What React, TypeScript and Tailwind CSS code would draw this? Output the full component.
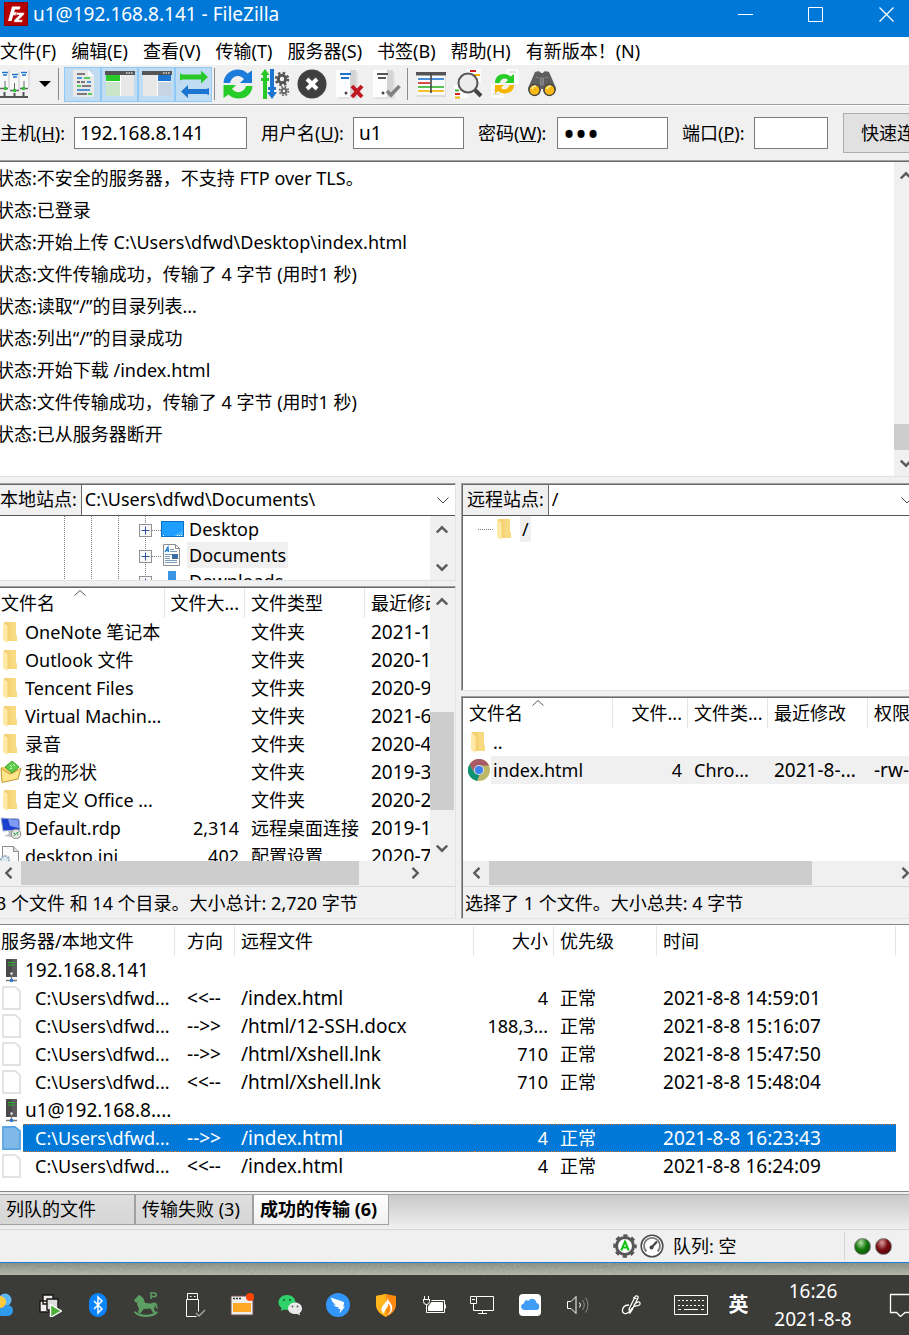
import type { ReactNode } from "react"

interface LocalFile {
  icon: "folder" | "shapes" | "rdp" | "ini"
  name: string
  size: string
  type: string
  modified: string
}

interface Transfer {
  server?: string
  direction?: string
  remote?: string
  size?: string
  time?: string
  selected?: boolean
}

const MENUS = ["文件(F)", "编辑(E)", "查看(V)", "传输(T)", "服务器(S)", "书签(B)", "帮助(H)", "有新版本！(N)"]

const LOG_LINES = [
  "不安全的服务器，不支持 FTP over TLS。",
  "已登录",
  "开始上传 C:\\Users\\dfwd\\Desktop\\index.html",
  "文件传输成功，传输了 4 字节 (用时1 秒)",
  "读取“/”的目录列表...",
  "列出“/”的目录成功",
  "开始下载 /index.html",
  "文件传输成功，传输了 4 字节 (用时1 秒)",
  "已从服务器断开",
]

const LOCAL_FILES: LocalFile[] = [
  { icon: "folder", name: "OneNote 笔记本", size: "", type: "文件夹", modified: "2021-12-1" },
  { icon: "folder", name: "Outlook 文件", size: "", type: "文件夹", modified: "2020-11-3" },
  { icon: "folder", name: "Tencent Files", size: "", type: "文件夹", modified: "2020-9-12" },
  { icon: "folder", name: "Virtual Machin...", size: "", type: "文件夹", modified: "2021-6-20" },
  { icon: "folder", name: "录音", size: "", type: "文件夹", modified: "2020-4-15" },
  { icon: "shapes", name: "我的形状", size: "", type: "文件夹", modified: "2019-3-18" },
  { icon: "folder", name: "自定义 Office ...", size: "", type: "文件夹", modified: "2020-2-21" },
  { icon: "rdp", name: "Default.rdp", size: "2,314", type: "远程桌面连接", modified: "2019-12-9" },
  { icon: "ini", name: "desktop.ini", size: "402", type: "配置设置", modified: "2020-7-30" },
]

const TRANSFERS: Transfer[] = [
  { server: "192.168.8.141" },
  { direction: "<<--", remote: "/index.html", size: "4", time: "2021-8-8 14:59:01" },
  { direction: "-->>", remote: "/html/12-SSH.docx", size: "188,3...", time: "2021-8-8 15:16:07" },
  { direction: "-->>", remote: "/html/Xshell.lnk", size: "710", time: "2021-8-8 15:47:50" },
  { direction: "<<--", remote: "/html/Xshell.lnk", size: "710", time: "2021-8-8 15:48:04" },
  { server: "u1@192.168.8...." },
  { direction: "-->>", remote: "/index.html", size: "4", time: "2021-8-8 16:23:43", selected: true },
  { direction: "<<--", remote: "/index.html", size: "4", time: "2021-8-8 16:24:09" },
]

export default function App() {
  return (
    <div className="flex min-h-screen flex-col overflow-hidden bg-[#f0f0f0] font-['Noto_Sans','Noto_Sans_CJK_SC',sans-serif] text-[18px] leading-7 text-black">
      <TitleBar />
      <MenuBar />
      <Toolbar />
      <QuickConnect />
      <MessageLog />
      <main className="mt-[6px] grid grid-cols-[456fr_448fr] gap-[5px]">
        <LocalPane />
        <RemotePane />
      </main>
      <QueueList />
      <QueueTabs />
      <StatusBar />
      <Wallpaper />
      <Taskbar />
    </div>
  )
}

function TitleBar() {
  return (
    <header className="flex h-[37px] shrink-0 items-start justify-between overflow-hidden bg-[#0078d7] text-white">
      <div className="flex items-center gap-[5px] pl-1">
        <svg className="size-6" viewBox="0 0 24 24">
          <rect width="24" height="24" fill="#b40000" />
          <rect x=".5" y=".5" width="23" height="23" fill="none" stroke="#6e0000" strokeDasharray="1.5 1.5" />
          <path d="M4 19 8 4.500h8.500l-.9 3H11l-.8 2.800h3.600l-.9 2.900H9.300L7.600 19z" fill="#fff" />
          <path d="M12.500 10.500h8l-.6 2.300-5 5h4l-.7 2.500H9.600l.6-2.300 5-5h-3.300z" fill="#fff" stroke="#b40000" strokeWidth=".5" />
        </svg>
        <h1 className="text-[19px]">u1@192.168.8.141 - FileZilla</h1>
      </div>
      <div className="-mr-[13px] flex">
        <button type="button" aria-label="最小化" className="grid h-7 w-[70px] place-items-center">
          <svg className="size-4" viewBox="0 0 16 16" stroke="#fff"><path d="M0 8.500h15" /></svg>
        </button>
        <button type="button" aria-label="最大化" className="grid h-7 w-[70px] place-items-center">
          <svg className="size-4" viewBox="0 0 16 16" stroke="#fff" fill="none"><path d="M.5 1.500h14v14H.5z" /></svg>
        </button>
        <button type="button" aria-label="关闭" className="grid h-7 w-[71px] place-items-center">
          <svg className="size-4" viewBox="0 0 16 16" stroke="#fff" strokeWidth="1.300"><path d="m.5 1.500 14 14m0-14-14 14" /></svg>
        </button>
      </div>
    </header>
  )
}

function MenuBar() {
  return (
    <nav className="flex h-7 shrink-0 gap-[15px] overflow-hidden bg-white whitespace-nowrap">
      {MENUS.map((menu) => (
        <button key={menu} type="button">{menu}</button>
      ))}
    </nav>
  )
}

function Toolbar() {
  return (
    <div className="flex h-[41px] shrink-0 items-center border-b border-white bg-[#f0f0f0] pb-[2px] shadow-[inset_0_-1px_0_#a0a0a0]">
      <button type="button" aria-label="站点管理器" className="flex w-[58px] items-center gap-2">
        <SiteManagerIcon />
        <svg className="h-[6px] w-[12px]" viewBox="0 0 12 6"><path d="M0 0h12L6 6z" /></svg>
      </button>
      <Separator />
      <div className="ml-[5px] flex">
        <ToolButton label="消息日志" active><LogIcon /></ToolButton>
        <ToolButton label="本地目录树" active><LocalTreeIcon /></ToolButton>
        <ToolButton label="远程目录树" active><RemoteTreeIcon /></ToolButton>
        <ToolButton label="传输队列" active><QueueIcon /></ToolButton>
      </div>
      <div className="ml-[2px]"><Separator /></div>
      <div className="ml-1 flex">
        <ToolButton label="刷新"><RefreshIcon /></ToolButton>
        <ToolButton label="处理队列"><ProcessIcon /></ToolButton>
        <ToolButton label="取消"><CancelIcon /></ToolButton>
        <ToolButton label="断开"><DisconnectIcon /></ToolButton>
        <ToolButton label="重新连接"><ReconnectIcon /></ToolButton>
      </div>
      <div className="ml-[3px]"><Separator /></div>
      <div className="ml-1 flex">
        <ToolButton label="比较"><FilterIcon /></ToolButton>
        <ToolButton label="过滤"><SearchListIcon /></ToolButton>
        <ToolButton label="同步浏览"><SyncIcon /></ToolButton>
        <ToolButton label="搜索"><BinocularsIcon /></ToolButton>
      </div>
    </div>
  )
}

function Separator() {
  return <div className="h-8 w-px bg-[#8c8c8c]" />
}

function ToolButton({ label, active, children }: { label: string; active?: boolean; children: ReactNode }) {
  return (
    <button
      type="button"
      aria-label={label}
      className={`grid h-[35px] w-[37px] place-items-center ${active ? "border border-[#90c8f6] bg-[#c0dcf3]" : ""}`}
    >
      {children}
    </button>
  )
}

function QuickConnect() {
  const field = "h-8 border border-[#7a7a7a] bg-white px-[5px] outline-none"
  return (
    <form className="flex h-[54px] shrink-0 items-center overflow-hidden bg-[#f0f0f0] whitespace-nowrap">
      <label htmlFor="host" className="w-[74px] shrink-0">主机(<u>H</u>):</label>
      <input id="host" defaultValue="192.168.8.141" className={`${field} w-[173px] text-[19px]`} />
      <label htmlFor="user" className="w-[106px] shrink-0 pl-[14px]">用户名(<u>U</u>):</label>
      <input id="user" defaultValue="u1" className={`${field} w-[111px] text-[19px]`} />
      <label htmlFor="pass" className="w-[93px] shrink-0 pl-[14px]">密码(<u>W</u>):</label>
      <input id="pass" type="password" defaultValue="abc" className={`${field} w-[111px] text-[32px]`} />
      <label htmlFor="port" className="w-[86px] shrink-0 pl-[14px]">端口(<u>P</u>):</label>
      <input id="port" className={`${field} w-[74px] text-[19px]`} />
      <button type="button" className="ml-[15px] h-10 shrink-0 border border-[#adadad] bg-[#e1e1e1] px-[17px]">
        快速连接(Q)
      </button>
    </form>
  )
}

function MessageLog() {
  return (
    <section className="flex flex-1 overflow-hidden border-t border-b border-t-[#a0a0a0] border-b-[#e3e3e3] bg-white pt-px shadow-[inset_0_1px_0_#696969]">
      <div className="-ml-1 flex-1 pb-5 leading-8 whitespace-nowrap">
        {LOG_LINES.map((line, i) => (
          <p key={i}>状态:{line}</p>
        ))}
      </div>
      <div className="flex w-[15px] flex-col overflow-hidden bg-[#f0f0f0]">
        <VArrow />
        <div className="flex-1" />
        <div className="h-[26px] bg-[#cdcdcd]" />
        <VArrow down />
      </div>
    </section>
  )
}

function VArrow({ down }: { down?: boolean }) {
  return (
    <button type="button" aria-label={down ? "向下滚动" : "向上滚动"} className="grid h-[26px] w-6 shrink-0 place-items-center">
      <svg className="h-[9px] w-3" viewBox="0 0 12 9" fill="none" stroke="#5a5a5a" strokeWidth="2.400">
        <path d={down ? "m.8 1.500 5.200 5.200 5.200-5.200" : "M.8 7.500 6 2.300l5.200 5.200"} />
      </svg>
    </button>
  )
}

function HArrow({ right }: { right?: boolean }) {
  return (
    <button type="button" aria-label={right ? "向右滚动" : "向左滚动"} className="grid h-6 w-[26px] shrink-0 place-items-center">
      <svg className="h-3 w-[9px]" viewBox="0 0 9 12" fill="none" stroke="#5a5a5a" strokeWidth="2.400">
        <path d={right ? "M1.500.8 6.700 6l-5.200 5.200" : "M7.500.8 2.300 6l5.200 5.200"} />
      </svg>
    </button>
  )
}

function SitePicker({ id, label, value }: { id: string; label: string; value: string }) {
  return (
    <div className="flex h-[31px] border-b border-[#555] whitespace-nowrap">
      <label htmlFor={id} className="shrink-0 border-r border-[#696969] bg-[#f0f0f0] px-1">{label}</label>
      <div className="relative flex-1 bg-white">
        <select id={id} className="h-[28px] w-full appearance-none bg-white pl-[3px] outline-none">
          <option>{value}</option>
        </select>
        <svg className="pointer-events-none absolute top-3 right-[6px] h-[7px] w-3" viewBox="0 0 12 7" fill="none" stroke="#444">
          <path d="m.5.5 5.500 5.500 5.500-5.500" />
        </svg>
      </div>
    </div>
  )
}

function SortCaret({ className }: { className: string }) {
  return (
    <svg className={`absolute top-[2px] h-[6px] w-3 ${className}`} viewBox="0 0 12 6" fill="none" stroke="#555">
      <path d="M.5 5.500 6 .5l5.500 5" />
    </svg>
  )
}

const th = "h-[30px] border-r border-[#e5e5e5] text-left font-normal"
const sunken = "border-t border-t-[#a0a0a0] pt-px shadow-[inset_0_1px_0_#696969]"
const sunkenLeft = "border-t border-l border-t-[#a0a0a0] border-l-[#a0a0a0] pt-px pl-px shadow-[inset_1px_1px_0_#696969]"

function LocalPane() {
  return (
    <section className="flex min-w-0 flex-col">
      <div className={`border-r border-b border-[#e3e3e3] ${sunken}`}>
        <div className="-ml-1">
          <SitePicker id="local-site" label="本地站点:" value={"C:\\Users\\dfwd\\Documents\\"} />
        </div>
        <div className="flex h-16 overflow-hidden bg-white">
          <div className="flex flex-1">
            <TreeGuides />
            <ul className="leading-[26px]">
              <TreeItem label="Desktop"><DesktopIcon /></TreeItem>
              <TreeItem label="Documents" selected><DocumentIcon /></TreeItem>
              <TreeItem label="Downloads"><DownloadIcon /></TreeItem>
            </ul>
          </div>
          <div className="flex w-[25px] flex-col justify-between bg-[#f0f0f0]">
            <VArrow />
            <VArrow down />
          </div>
        </div>
      </div>
      <div className={`mt-[5px] flex-1 border-r border-b border-[#e3e3e3] ${sunken}`}>
        <div className="flex h-[273px] bg-white">
          <div className="min-w-0 flex-1 overflow-hidden">
            <table className="w-full table-fixed border-separate border-spacing-0 whitespace-nowrap">
              <colgroup>
                <col className="w-[23px]" />
                <col className="w-[142px]" />
                <col className="w-20" />
                <col className="w-[120px]" />
                <col />
              </colgroup>
              <thead>
                <tr>
                  <th colSpan={2} className={`${th} relative pl-px`}>文件名<SortCaret className="left-[74px]" /></th>
                  <th className={`${th} pr-[5px] text-right`}>文件大...</th>
                  <th className={`${th} pl-[6px]`}>文件类型</th>
                  <th className="overflow-hidden pl-[6px] text-left font-normal">最近修改</th>
                </tr>
              </thead>
              <tbody>
                {LOCAL_FILES.map((file) => (
                  <tr key={file.name} className="h-7">
                    <td><FileIcon kind={file.icon} /></td>
                    <td className="pl-[2px]">{file.name}</td>
                    <td className="pr-[6px] text-right">{file.size}</td>
                    <td className="pl-[6px]">{file.type}</td>
                    <td className="overflow-hidden pl-[6px] text-[19px]">{file.modified}</td>
                  </tr>
                ))}
              </tbody>
            </table>
          </div>
          <div className="flex w-[25px] flex-col bg-[#f0f0f0]">
            <VArrow />
            <div className="flex-1" />
            <div className="mr-px h-[98px] bg-[#cdcdcd]" />
            <div className="h-[25px]" />
            <VArrow down />
          </div>
        </div>
        <div className="flex h-6 bg-[#f0f0f0]">
          <div className="-ml-[5px]"><HArrow /></div>
          <div className="w-[338px] bg-[#cdcdcd]" />
          <div className="flex-1" />
          <div className="mr-[27px]"><HArrow right /></div>
        </div>
        <p className="-ml-1 mt-px h-8 border-t border-[#d9d9d9] pt-[2px] whitespace-nowrap">3 个文件 和 14 个目录。大小总计: 2,720 字节</p>
      </div>
    </section>
  )
}

function TreeGuides() {
  return (
    <svg className="h-16 w-[138px] shrink-0" viewBox="0 0 138 64" stroke="#808080" strokeDasharray="1 1">
      <path d="M64.500 0v64M91.500 0v64M118.500 0v64" />
    </svg>
  )
}

function TreeItem({ label, selected, children }: { label: string; selected?: boolean; children: ReactNode }) {
  return (
    <li className="flex items-center">
      <svg className="h-[26px] w-[23px]" viewBox="0 0 23 26" fill="none">
        <path d="M7.500 0v26M14 14.500h9" stroke="#808080" strokeDasharray="1 1" />
        <rect x="1.500" y="8.500" width="12" height="12" fill="#f8f8f8" stroke="#919191" />
        <path d="M3.500 14.500h8m-4-4v8" stroke="#2f4f9c" />
      </svg>
      {children}
      <span className={`ml-[3px] px-[2px] ${selected ? "bg-[#f0f0f0]" : ""}`}>{label}</span>
    </li>
  )
}

function RemotePane() {
  return (
    <section className="flex min-w-0 flex-col overflow-hidden">
      <div className={`h-[208px] border-b border-b-[#e3e3e3] bg-white ${sunkenLeft}`}>
        <div className="-mr-[10px]">
          <SitePicker id="remote-site" label="远程站点:" value="/" />
        </div>
        <ul className="leading-[26px]">
          <li className="flex items-center pl-[15px]">
            <svg className="h-px w-4" viewBox="0 0 16 1" stroke="#808080" strokeDasharray="1 1"><path d="M0 .5h16" /></svg>
            <FileIcon kind="folder" />
            <span className="ml-[4px] bg-[#f0f0f0] px-[2px]">/</span>
          </li>
        </ul>
      </div>
      <div className={`mt-[5px] flex flex-1 flex-col border-b border-b-[#e3e3e3] ${sunkenLeft}`}>
        <div className="flex-1 overflow-hidden bg-white">
          <table className="w-full table-fixed border-separate border-spacing-0 whitespace-nowrap">
            <colgroup>
              <col className="w-7" />
              <col className="w-[122px]" />
              <col className="w-[75px]" />
              <col className="w-20" />
              <col className="w-[100px]" />
              <col />
            </colgroup>
            <thead>
              <tr>
                <th colSpan={2} className={`${th} relative pl-[6px]`}>文件名<SortCaret className="left-[69px]" /></th>
                <th className={`${th} pr-[5px] text-right`}>文件...</th>
                <th className={`${th} pl-[6px]`}>文件类...</th>
                <th className={`${th} pl-[6px]`}>最近修改</th>
                <th className="overflow-hidden pl-[6px] text-left font-normal">权限</th>
              </tr>
            </thead>
            <tbody>
              <tr className="h-7">
                <td className="pl-[5px]"><FileIcon kind="folder" /></td>
                <td className="pl-[2px]">..</td>
                <td colSpan={4} />
              </tr>
              <tr className="h-7">
                <td className="pl-[5px]"><ChromeIcon /></td>
                <td className="bg-[#f0f0f0] pl-[2px]">index.html</td>
                <td className="bg-[#f0f0f0] pr-[6px] text-right">4</td>
                <td className="bg-[#f0f0f0] pl-[6px]">Chro...</td>
                <td className="bg-[#f0f0f0] pl-[6px] text-[19px]">2021-8-...</td>
                <td className="overflow-hidden bg-[#f0f0f0] pl-[6px] text-[19px]">-rw-r--r--</td>
              </tr>
            </tbody>
          </table>
        </div>
        <div className="-mr-[9px] flex h-6 bg-[#f0f0f0]">
          <HArrow />
          <div className="w-[323px] bg-[#cdcdcd]" />
          <div className="flex-1" />
          <HArrow right />
        </div>
        <p className="mt-px h-8 border-t border-[#d9d9d9] pt-[2px] pl-[2px] whitespace-nowrap">选择了 1 个文件。大小总共: 4 字节</p>
      </div>
    </section>
  )
}

function QueueList() {
  return (
    <section className="mt-[5px] overflow-hidden border-t border-b border-[#828790] bg-white pt-px pb-[11px]">
      <table className="w-full table-fixed border-separate border-spacing-0 whitespace-nowrap">
        <colgroup>
          <col className="w-[23px]" />
          <col className="w-[152px]" />
          <col className="w-[60px]" />
          <col className="w-[239px]" />
          <col className="w-20" />
          <col className="w-[103px]" />
          <col className="w-[239px]" />
          <col />
        </colgroup>
        <thead>
          <tr>
            <th colSpan={2} className={`${th} pl-px`}>服务器/本地文件</th>
            <th className={`${th} pl-3`}>方向</th>
            <th className={`${th} pl-[6px]`}>远程文件</th>
            <th className={`${th} pr-[5px] text-right`}>大小</th>
            <th className={`${th} pl-[6px]`}>优先级</th>
            <th className={`${th} pl-[6px]`}>时间</th>
            <td />
          </tr>
        </thead>
        <tbody>
          {TRANSFERS.map((row, i) =>
            row.server ? (
              <tr key={i} className="h-7">
                <td><ServerIcon /></td>
                <td colSpan={7} className="pl-[2px] text-[19px]">{row.server}</td>
              </tr>
            ) : (
              <QueueRow key={i} row={row} />
            )
          )}
        </tbody>
      </table>
    </section>
  )
}

function QueueRow({ row }: { row: Transfer }) {
  const cell = row.selected
    ? "border-y border-dotted border-[#c07a3c] bg-[#0078d7] leading-[26px] text-white"
    : ""
  return (
    <tr className="h-7">
      <td><PageIcon selected={row.selected} /></td>
      <td className={`${cell} pl-3`}>C:\Users\dfwd...</td>
      <td className={`${cell} pl-3 text-[19px]`}>{row.direction}</td>
      <td className={`${cell} pl-[6px] text-[19px]`}>{row.remote}</td>
      <td className={`${cell} pr-[6px] text-right`}>{row.size}</td>
      <td className={`${cell} pl-[6px]`}>正常</td>
      <td className={`${cell} pl-[6px] text-[19px]`}>{row.time}</td>
      <td />
    </tr>
  )
}

function QueueTabs() {
  const tab = "h-[30px] border border-t-0 border-[#a0a0a0] px-[6px] pb-[2px] text-left whitespace-nowrap"
  return (
    <div className="mt-[2px] flex h-9 shrink-0 items-start border-t border-b border-t-[#a0a0a0] border-b-[#d5d5d5] bg-linear-to-b from-[#c8c8c8] to-[#f0f0f0]">
      <button type="button" className={`${tab} w-[135px] border-l-0 bg-linear-to-b from-[#dedede] to-[#d6d6d6]`}>列队的文件</button>
      <button type="button" className={`${tab} w-[118px] bg-linear-to-b from-[#dedede] to-[#d6d6d6]`}>传输失败 (3)</button>
      <button type="button" className={`${tab} w-[136px] bg-linear-to-b from-white to-[#f0f0f0] font-bold`}>成功的传输 (6)</button>
    </div>
  )
}

function StatusBar() {
  return (
    <footer className="flex h-8 shrink-0 items-center justify-end bg-[#f0f0f0]">
      <div className="flex w-[231px] items-center gap-[3px]">
        <svg className="size-6" viewBox="0 0 24 24">
          <circle cx="12" cy="12" r="8.500" fill="#fff" stroke="#555" strokeWidth="3" />
          <circle cx="12" cy="12" r="10.500" fill="none" stroke="#555" strokeWidth="2.500" strokeDasharray="4.200 4.050" strokeDashoffset="2" />
          <path d="m8.200 16.500 3.800-9 3.800 9M9.600 13.500h4.800" fill="none" stroke="#12c412" strokeWidth="2" />
        </svg>
        <svg className="size-6" viewBox="0 0 24 24" fill="none">
          <circle cx="12" cy="12" r="10.800" fill="#fff" stroke="#4d4d4d" strokeWidth="1.600" />
          <path d="M6.300 17.500a8 8 0 1 1 11.400 0" stroke="#777" strokeWidth="1.800" />
          <path d="m11 14 6-6.500" stroke="#444" strokeWidth="2.200" />
          <circle cx="11.500" cy="13.500" r="2" fill="#444" />
        </svg>
        <span className="pl-[6px]">队列: 空</span>
      </div>
      <div className="flex h-7 w-[65px] items-center gap-1 border-l border-[#d5d5d5] pl-[9px]">
        <span className="size-[17px] rounded-full border border-[#777] bg-radial-[at_40%_25%] from-[#b4e0a8] via-[#157a0c] via-45% to-[#033f00]" />
        <span className="size-[17px] rounded-full border border-[#777] bg-radial-[at_40%_25%] from-[#dba0a0] via-[#7a0c10] via-45% to-[#400003]" />
      </div>
    </footer>
  )
}

// The strip of desktop that shows between the window and the taskbar
function Wallpaper() {
  return (
    <div className="h-[13px] shrink-0 border-t border-[#1a7fd4] bg-linear-to-b from-[#858a80] to-[#b4b6a8]">
      <svg className="h-3 w-full opacity-25">
        <filter id="grain">
          <feTurbulence type="fractalNoise" baseFrequency=".35" numOctaves="3" />
          <feColorMatrix type="saturate" values="0" />
        </filter>
        <rect width="100%" height="12" filter="url(#grain)" />
      </svg>
    </div>
  )
}

function Taskbar() {
  return (
    <div className="flex h-[60px] shrink-0 items-center overflow-hidden bg-[#3b3b38] text-white">
      <TrayItem label="联系人" className="-ml-[22px] w-12">
        <svg className="size-6" viewBox="0 0 24 24">
          <circle cx="15" cy="7" r="6.500" fill="#5db7f2" />
          <rect x="7" y="12" width="16" height="11" rx="5.500" fill="#2f9af0" />
          <circle cx="10" cy="9" r="6" fill="#ffc93c" />
        </svg>
      </TrayItem>
      <TrayItem label="虚拟机" className="w-12">
        <svg className="size-6" viewBox="0 0 24 24" stroke="#1a1414" strokeWidth="1.400">
          <path d="M5 2h10v9H5zM2 8h9v11H2z" fill="#eee" />
          <path d="M9 6h11v11H9z" fill="#ddd" />
          <path d="m12.500 11.500 11 6.500-11 6.500z" fill="#4caf3a" stroke="#fff" />
        </svg>
      </TrayItem>
      <TrayItem label="蓝牙" className="w-12">
        <svg className="size-6" viewBox="0 0 24 24" fill="none">
          <rect x="3" width="18" height="24" rx="9" fill="#0a84ff" />
          <path d="m8 8 8 8-4 4V4l4 4-8 8" stroke="#fff" strokeWidth="1.500" />
        </svg>
      </TrayItem>
      <TrayItem label="木马" className="w-12">
        <svg className="size-[26px]" viewBox="0 0 26 26" fill="#5d9f62">
          <path d="M1 8 6 3l1.500.5 3 3 1.500 4.500 6 .5c2-1.500 5-1.500 6 1l1 5-2-2-1-2-1 4 2 3-2.500 1-3-5-7 .5-3 4.500-2.500-1 1-4-2-4 .5-3L3 11z" />
          <path d="M2 19c5 5 17 5 22 0l1 1.500c-5 6-19 6-24 0z" />
          <path d="M18 7V1h3.500a1.800 1.800 0 0 1 0 3.600H18" fill="none" stroke="#5d9f62" strokeWidth="1.500" />
        </svg>
      </TrayItem>
      <TrayItem label="安全删除硬件" className="w-12">
        <svg className="size-6" viewBox="0 0 24 24" fill="none" stroke="#fff">
          <path d="M5.500 6V.5h10V6M14.500 23.500h-10v-17h12v12M8 3.500h1.500m2.500 0h1.500" />
          <path d="m14 20 3 3 6-6" stroke="#aaa" strokeWidth="1.300" />
        </svg>
      </TrayItem>
      <TrayItem label="窗口" className="w-12">
        <svg className="size-6" viewBox="0 0 24 24">
          <path d="M1 3h22v19H1z" fill="#eee" stroke="#6b5148" />
          <path d="M3 10h18v9H3z" fill="#ffa726" />
          <path d="M3 5.500h9" stroke="#333" strokeWidth="1.500" strokeDasharray="2 1" />
          <circle cx="20" cy="4" r="4" fill="#ff4500" />
        </svg>
      </TrayItem>
      <TrayItem label="微信" className="w-12">
        <svg className="size-6" viewBox="0 0 24 24">
          <path d="M9 2c5 0 8.500 3.500 8.500 7.500S14 17 9 17l-3-.5L3 18l.5-3C1.500 13.500.5 11.500.5 9.500.5 5.500 4 2 9 2z" fill="#2fd36b" />
          <circle cx="6" cy="7" r="1.100" fill="#145c30" />
          <circle cx="12" cy="7" r="1.100" fill="#145c30" />
          <path d="M17 9.500c4 0 7 2.500 7 6 0 2-1 3.500-2.500 4.500l.5 2.500-2.500-1.500H17c-4 0-7-2.500-7-5.500s3-6 7-6z" fill="#e9e9e9" />
          <circle cx="14.500" cy="13.500" r=".9" fill="#555" />
          <circle cx="19.500" cy="13.500" r=".9" fill="#555" />
        </svg>
      </TrayItem>
      <TrayItem label="钉钉" className="w-12">
        <svg className="size-6" viewBox="0 0 24 24">
          <circle cx="12" cy="12" r="12" fill="#3296fa" />
          <path d="M5 4.500c4 2 9 2.500 12.500 4.500 1.200.8.5 2.500-.5 4.500h2L13.500 20.500l1-4.500H12l1-1.500c-3-.5-4.500-1.500-5.500-3l3 .3C7.500 10.500 5.500 8.500 5 4.500z" fill="#fff" />
        </svg>
      </TrayItem>
      <TrayItem label="火绒安全" className="w-12">
        <svg className="size-6" viewBox="0 0 24 24">
          <path d="M12 1 22 3v8c0 6-4 10-10 13C6 21 2 17 2 11V3z" fill="#ff8a0f" />
          <path d="M12 1v23C6 21 2 17 2 11V3z" fill="#ffb51c" />
          <path d="M14 4c0 5-7 8-6.500 13 .2 2 1.500 3 2.500 3.500 0-4 4-5 4.500-10 3 4 3 9-2.500 12 7-2 8-9 4-13-2-2-2-3.500-2-5.500z" fill="#fff" />
        </svg>
      </TrayItem>
      <TrayItem label="电源" className="w-12">
        <svg className="size-6" viewBox="0 0 24 24" fill="none" stroke="#fff">
          <path d="M4.500 11v8.500h18v-12H9.500M1 6.500h7M1.500 7v1.500a3 3 0 0 0 6 0V7M2.500 3v3m4-3v3" />
          <path d="M9.500 9.500h11v8h-14v-4z" fill="#fff" />
          <path d="M23.500 11.500v4" />
        </svg>
      </TrayItem>
      <TrayItem label="网络" className="w-12">
        <svg className="size-6" viewBox="0 0 24 24" fill="none" stroke="#fff">
          <path d="M7 3.500h16.500v14h-20v-7M12.500 17.500v3M8 20.500h9" />
          <path d="M.5 3.500h6v7h-6zM2 6.500h3" />
        </svg>
      </TrayItem>
      <TrayItem label="iCloud" className="w-12">
        <svg className="size-6" viewBox="0 0 24 24">
          <rect x="1" y="1" width="22" height="22" rx="4" fill="#fff" />
          <path d="M7 17c-5 0-5-6-1-6.500C6 7 9.500 6.500 10.500 8c2-4 8-2.500 8 2 4 .5 3.500 7 0 7z" fill="#3f9df5" />
        </svg>
      </TrayItem>
      <TrayItem label="音量" className="w-12">
        <svg className="size-6" viewBox="0 0 24 24" fill="none" stroke="#fff">
          <path d="M1.500 8.500h3.500l5-5v17l-5-5H1.500z" />
          <path d="M13.500 9.500q2 2.500 0 5" />
          <path d="M16.500 7q3.500 5 0 10M19.500 4.500q5 7.500 0 15" stroke="#8a8a88" />
        </svg>
      </TrayItem>
      <TrayItem label="手写笔" className="w-[60px]">
        <svg className="size-6" viewBox="0 0 24 24" fill="none" stroke="#fff" strokeWidth="1.300">
          <path d="m10 20-1-4 6-12c1-2 4-1 3 1l-6 12zM13 4.500l5 2M9 12c-7 0-8 7-4.500 8.500C9 22 11 15 14 13.500c3-1 7-1 6-3.500s-5 0-6 2" />
        </svg>
      </TrayItem>
      <TrayItem label="触摸键盘" className="w-[58px]">
        <svg className="h-5 w-[34px]" viewBox="0 0 34 20" fill="none" stroke="#fff">
          <path d="M.5.500h33v19H.5z" />
          <path d="M4 5.500h26M4 10.500h26" strokeDasharray="2 2" />
          <path d="M4 14.500h3m3 0h14m3 0h3" />
        </svg>
      </TrayItem>
      <button type="button" className="w-[37px] shrink-0 text-[20px] font-bold">英</button>
      <time className="w-28 shrink-0 text-center text-[19px]">
        16:26
        <br />
        2021-8-8
      </time>
      <button type="button" aria-label="通知" className="ml-5 shrink-0">
        <svg className="h-6 w-[26px]" viewBox="0 0 26 24" fill="none" stroke="#fff" strokeWidth="1.300">
          <path d="M1.500 1.500h23v18H16l-4.500 4-4-4h-6z" />
        </svg>
      </button>
    </div>
  )
}

function TrayItem({ label, className, children }: { label: string; className: string; children: ReactNode }) {
  return (
    <button type="button" aria-label={label} className={`grid h-full shrink-0 place-items-center ${className}`}>
      {children}
    </button>
  )
}

/* File list icons */

function FileIcon({ kind }: { kind: LocalFile["icon"] }) {
  if (kind === "shapes") {
    return (
      <svg className="size-[22px]" viewBox="0 0 22 22">
        <path d="M1 6h5l2 2h10l1 10H1z" fill="#f0cc62" />
        <path d="m12 0 7 6-7 6-7-6z" fill="#5fce4a" stroke="#3ba030" />
        <path d="m10 4 2 2m1-3 2 2m-5 3 2-1" stroke="#d8ffd0" />
        <path d="M1 7.500 8 12l2 1 3-1 8-5-3 11-16 3.500z" fill="#ffe68c" stroke="#c09a35" />
      </svg>
    )
  }
  if (kind === "rdp") {
    return (
      <svg className="size-[22px]" viewBox="0 0 22 22">
        <path d="m1 1 18 1 1 11-17 1z" fill="#1c3fd0" stroke="#aeb8cc" />
        <path d="m8 2 10 1 1 8-9-2z" fill="#7f9cf2" />
        <path d="m8 14 1 3-5 2 8 1v-6z" fill="#b9bec8" />
        <circle cx="16" cy="17" r="4.800" fill="#e2e5e2" stroke="#8a8f8a" />
        <path d="m13.500 16 2 1-1.500 2m4.500-4-2 1 1.500 2" stroke="#2f9a3a" fill="none" />
      </svg>
    )
  }
  if (kind === "ini") {
    return (
      <svg className="size-[22px]" viewBox="0 0 22 22">
        <path d="M2.500 1.500h11l5 5v15h-16z" fill="#fafafa" stroke="#8d8d8d" />
        <path d="M13.500 1.500v5h5" fill="#ddd" stroke="#8d8d8d" />
        <circle cx="5" cy="15" r="4" fill="#dbe9f3" stroke="#8aa6ba" strokeWidth="2" strokeDasharray="2 1" />
      </svg>
    )
  }
  return (
    <svg className="size-[22px]" viewBox="0 0 22 22">
      <path d="M4 1h12v13l1 1v5H4z" fill="#f5d273" />
      <path d="M10 1h6v13l1 1v5h-6z" fill="#f8da80" />
      <path d="M3 1.500 7.500 5v17L3 19z" fill="#ffe9a6" />
    </svg>
  )
}

function ChromeIcon() {
  return (
    <svg className="size-[22px]" viewBox="0 0 22 22">
      <circle cx="11" cy="11" r="11" fill="#bdb768" />
      <path d="M1.500 5.500a11 11 0 0 1 19 0L21 6.500H11L6.500 13z" fill="#a85a67" />
      <path d="M1.500 5.500 6.500 14l5 2-2.500 6A11 11 0 0 1 1.500 5.500z" fill="#0f9375" />
      <circle cx="11" cy="11" r="5" fill="#d5dbe6" />
      <circle cx="11" cy="11" r="4" fill="#3b82f0" />
    </svg>
  )
}

function DesktopIcon() {
  return (
    <svg className="h-[18px] w-[23px]" viewBox="0 0 23 18">
      <rect x=".5" y="1.500" width="22" height="15" fill="#1e9fff" stroke="#0b6fc2" />
      <path d="M22 2v8L12 16h10z" fill="#44b1ff" />
      <path d="M2 15.500h2m12 0h5" stroke="#fff" strokeDasharray="1 1" />
    </svg>
  )
}

function DocumentIcon() {
  return (
    <svg className="h-[22px] w-[23px]" viewBox="0 0 23 22" fill="none">
      <path d="M2.500.5h12l4 4v17h-16z" fill="#fdfdfd" stroke="#8d8d8d" />
      <path d="M14.500.5v4h4" stroke="#8d8d8d" />
      <path d="m4 8 3-5 .5 5M5 6.500h2" stroke="#1f7fd0" strokeWidth="1.300" />
      <path d="M9 5.500h4M9 7.500h7M4 10.500h12M4 12.500h5M4 14.500h5M4 16.500h12M4 18.500h12" stroke="#7a9cb8" />
      <path d="M11 10h6v5h-6z" fill="#3a6ea5" />
    </svg>
  )
}

function DownloadIcon() {
  return (
    <svg className="h-[22px] w-[23px]" viewBox="0 0 23 22">
      <path d="M7 1h8v11h5l-9 9-9-9h5z" fill="#3a95e4" />
    </svg>
  )
}

function ServerIcon() {
  return (
    <svg className="size-[23px]" viewBox="0 0 23 23">
      <path d="M6 0h6v18H6z" fill="#4a4a4a" />
      <path d="M12 0h5v18h-5z" fill="#5c5c5c" />
      <path d="M8 3.500h7M8 6h7" stroke="#27b427" />
      <path d="M6 21.500h11M11.500 15v6" stroke="#777" strokeWidth="1.500" />
      <circle cx="11.500" cy="14.500" r="1.200" fill="#eee" />
      <path d="M10 20h3v3h-3z" fill="#2a7fd4" />
    </svg>
  )
}

function PageIcon({ selected }: { selected?: boolean }) {
  return (
    <svg className="h-6 w-[23px]" viewBox="0 0 23 24">
      <path
        d="M3 1h12l5 4v18H3z"
        fill={selected ? "#7fb9ea" : "#fff"}
        stroke={selected ? "#5aa6e4" : "#e2e2e2"}
        strokeWidth="1.800"
      />
    </svg>
  )
}

/* Toolbar icons, drawn on a 32px grid */

function SiteManagerIcon() {
  return (
    <svg className="h-8 w-[31px]" viewBox="0 0 31 32" fill="none">
      <path d="M0 2h9v18H0zM10 4h9v18h-9zM20 2h9v18h-9z" fill="#f9f9f9" />
      <path d="M8 2h2v18H8zM18 4h2v18h-2zM28 2h2v18h-2z" fill="#dedede" />
      <path d="M2 4.500h6M3 7h4M12 6.500h6M13 9h4M21 4.500h6M22 7h4" stroke="#1c76d1" strokeWidth="1.300" />
      <path d="M5 13v8M14.500 15v8M24 13v8" stroke="#666" />
      <path d="M0 20.500h8m2 2h9m1-2h8" stroke="#666" strokeWidth="1.500" />
      <path d="M4 19h3v3H4zM13 21h3v3h-3zM22 19h3v3h-3z" fill="#2bc52b" />
      <path d="M0 29h28M4.500 24v5m10-4v4m9-5v5" stroke="#555" strokeWidth="2" />
    </svg>
  )
}

function LogIcon() {
  return (
    <svg className="size-8" viewBox="0 0 32 32" fill="none">
      <path d="M6 2h15l6 6v21H6z" fill="#e9e9e9" />
      <path d="M21 2v6h6z" fill="#fff" />
      <path d="M10 6h8M14 14h4M15 18h9M10 26h10" stroke="#555" strokeWidth="1.700" />
      <path d="M10 10h5M20 14h4M10 22h13" stroke="#1c76d1" strokeWidth="1.700" />
      <path d="M17 10h6M10 18h4M21 26h4" stroke="#2bc52b" strokeWidth="1.700" />
      <path d="M10 14h3" stroke="#555" strokeWidth="1.700" />
    </svg>
  )
}

function LocalTreeIcon() {
  return (
    <svg className="size-8" viewBox="0 0 32 32">
      <path d="M2 7h28v21H2z" fill="#e8e8e8" />
      <path d="M1 3h30v4H1z" fill="#555" />
      <path d="M22 5h7" stroke="#ddd" strokeWidth="1.500" strokeDasharray="1.500 1" />
      <path d="M2 7h14v6H2z" fill="#28c828" />
      <path d="M2 14h14v14H2z" fill="#cbe5cb" />
      <path d="M16 7h1v21h-1zM2 13h14v1H2z" fill="#fff" />
    </svg>
  )
}

function RemoteTreeIcon() {
  return (
    <svg className="size-8" viewBox="0 0 32 32">
      <path d="M2 7h28v21H2z" fill="#e8e8e8" />
      <path d="M1 3h30v4H1z" fill="#555" />
      <path d="M22 5h7" stroke="#ddd" strokeWidth="1.500" strokeDasharray="1.500 1" />
      <path d="M17 7h13v6H17z" fill="#1c76d1" />
      <path d="M17 14h13v14H17z" fill="#c7d4e2" />
      <path d="M16 7h1v21h-1zM17 13h13v1H17z" fill="#fff" />
    </svg>
  )
}

function QueueIcon() {
  return (
    <svg className="size-8" viewBox="0 0 32 32">
      <path d="m2 5.500 2.500 1H23V2.500l7 6.500-7 6.500v-4H4.500l-2.500 1z" fill="#28c828" />
      <path d="m31 20-2.500 1H10v-4L3 23.500l7 6.500v-4h18.500l2.500 1z" fill="#1c76d1" />
    </svg>
  )
}

function RefreshIcon() {
  return (
    <svg className="size-8" viewBox="0 0 32 32">
      <path d="M1.500 15C2 7 8 1.500 16 1.500c4 0 7 1.500 9.500 4L30 2.500V15H18l4-4c-4-5-12-4-14 4z" fill="#1c7cdc" />
      <path d="M30.500 18c-.5 8-6.500 12.500-14 12.500-4 0-7.500-1.500-10-4L1.500 30V17H14l-4 4c4 5 12 4 14-3z" fill="#28cc28" />
    </svg>
  )
}

function ProcessIcon() {
  return (
    <svg className="size-8" viewBox="0 0 32 32" fill="none">
      <path d="m6 1 4.500 6H8v3h2v3H8v18H4V13H2v-3h2V7H1.500z" fill="#28c828" />
      <path d="M11 1h4v18h2v3h-2v2h3l-5 7-5-7h3v-2H9v-3h2z" fill="#1c76d1" />
      <circle cx="23" cy="11" r="3.700" stroke="#555" strokeWidth="3" />
      <circle cx="23" cy="11" r="6" stroke="#555" strokeWidth="2.500" strokeDasharray="2.400 2.310" />
      <circle cx="25" cy="23" r="2.300" stroke="#666" strokeWidth="2" />
      <circle cx="25" cy="23" r="4.300" stroke="#666" strokeWidth="2" strokeDasharray="1.700 1.680" />
    </svg>
  )
}

function CancelIcon() {
  return (
    <svg className="size-8" viewBox="0 0 32 32">
      <circle cx="16" cy="16" r="14.500" fill="#404040" />
      <path d="m11 11 10 10m0-10L11 21" stroke="#fff" strokeWidth="4" />
    </svg>
  )
}

function ServerBody({ stroke }: { stroke: string }) {
  return (
    <>
      <path d="M5 4h20v27H5z" fill="#e2e2e2" />
      <path d="M3 2h14v27H3z" fill="#fdfdfd" />
      <path d="M17 2h6v27h-6z" fill="#d4d4d4" />
      <path d="M7 6h11M8 10h8" stroke={stroke} strokeWidth="2" />
      <circle cx="13" cy="25" r="1.500" fill="#444" />
    </>
  )
}

function DisconnectIcon() {
  return (
    <svg className="size-8" viewBox="0 0 32 32" fill="none">
      <ServerBody stroke="#1c76d1" />
      <path d="m19 18 10 11m0-11L19 29" stroke="#c01822" strokeWidth="4" />
    </svg>
  )
}

function ReconnectIcon() {
  return (
    <svg className="size-8" viewBox="0 0 32 32" fill="none">
      <ServerBody stroke="#555" />
      <path d="m17 23 4 4 8.500-9" stroke="#808080" strokeWidth="3.500" />
    </svg>
  )
}

function FilterIcon() {
  return (
    <svg className="size-8" viewBox="0 0 32 32" fill="none">
      <path d="M2 8h29v21H2z" fill="#dcdcdc" />
      <path d="M2 7h28v20H2z" fill="#fafafa" />
      <path d="M1 4h30v3.500H1z" fill="#555" />
      <path d="M3 11h26" stroke="#1c76d1" strokeWidth="1.600" />
      <path d="M3 15h12" stroke="#d02020" strokeWidth="1.600" />
      <path d="M3 19h26" stroke="#2bb52b" strokeWidth="1.600" />
      <path d="M3 23h26" stroke="#f0b400" strokeWidth="1.600" />
      <path d="M16 5v20" stroke="#444" strokeWidth="1.600" />
    </svg>
  )
}

function SearchListIcon() {
  return (
    <svg className="size-8" viewBox="0 0 32 32" fill="none">
      <path d="M15 1h14v13H15zM2 17h14v13H2z" fill="#fdfdfd" />
      <path d="M18 3h6M3 26h5" stroke="#d02020" strokeWidth="1.800" />
      <path d="M22 7h6M3 29.500h5" stroke="#f0b400" strokeWidth="1.800" />
      <path d="M3 22.500h4" stroke="#2bb52b" strokeWidth="1.800" />
      <circle cx="16" cy="15" r="9.500" fill="#ececec" stroke="#555" strokeWidth="2" />
      <path d="m23 22 6 6" stroke="#444" strokeWidth="4" />
    </svg>
  )
}

function SyncIcon() {
  return (
    <svg className="size-8" viewBox="0 0 32 32">
      <path d="M17 1h11l2 2v13H17zM2 16h11l2 2v12H2z" fill="#fcfcfc" />
      <path d="M20 4h7M4 22h5M4 26h7" stroke="#ccc" />
      <path d="M6 15C6 9 10 6 15 6c3 0 5 1 6.500 2.500L25 6v9h-9l3-3c-4-3-7-1-8.500 3z" fill="#28cc28" />
      <path d="M25 17c0 6-5 8.500-9.500 8.500-3 0-5-1-6.500-2.500L6 26v-9h9l-3 3c4 3 7 1 8.500-3z" fill="#f5b400" />
    </svg>
  )
}

function BinocularsIcon() {
  return (
    <svg className="size-8" viewBox="0 0 32 32">
      <path d="M9 4c3-1.500 5-1 6 1h2c1-2 3-2.500 6-1l7 16c0 4-3 8-7 8s-6-4-6-7h-2c0 3-2 7-6 7s-7-4-7-8z" fill="#5e5e5e" />
      <path d="m10 9 3 1M22 9l-3 1M14.500 10h3v7h-3z" stroke="#888" fill="#777" />
      <circle cx="8.500" cy="22" r="5.500" fill="#fbb814" stroke="#444" strokeWidth="1.300" />
      <circle cx="23.500" cy="22" r="5.500" fill="#fbb814" stroke="#444" strokeWidth="1.300" />
      <path d="M6 21q1-3 4-3M21 21q1-3 4-3" stroke="#fff3b0" strokeWidth="1.500" fill="none" />
    </svg>
  )
}
